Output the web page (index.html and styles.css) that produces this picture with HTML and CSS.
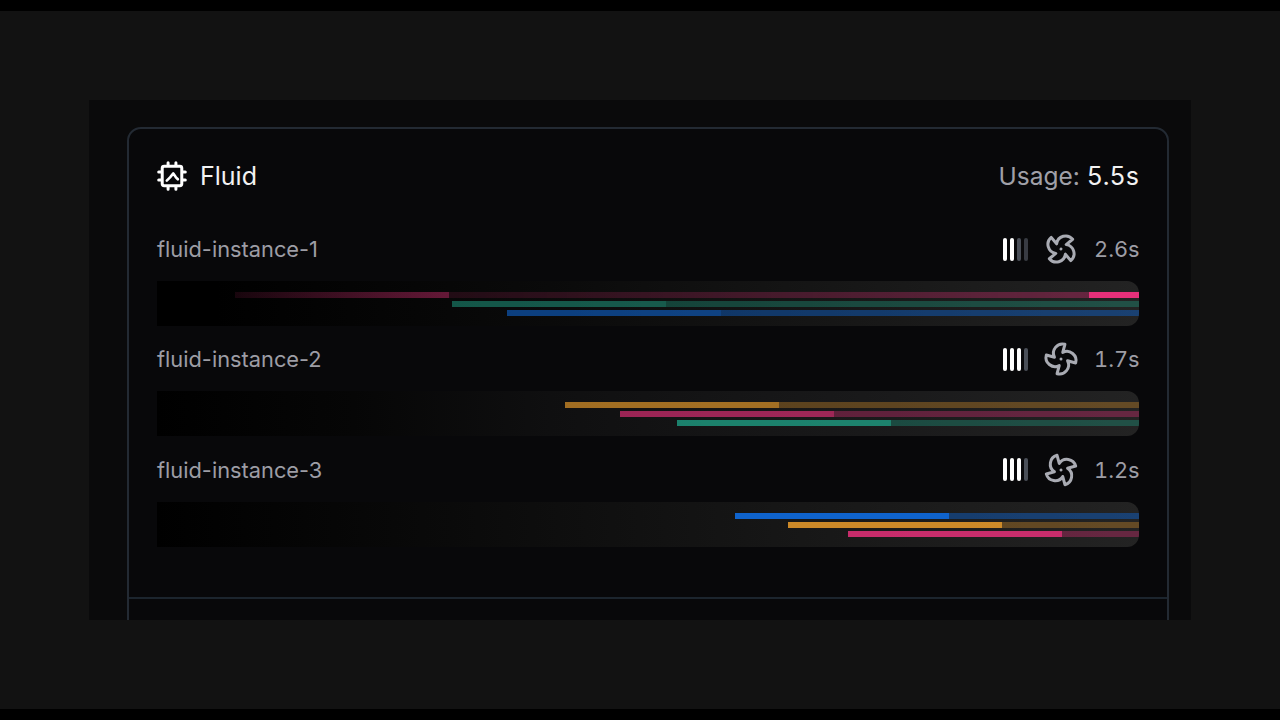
FILE: index.html
```html
<!DOCTYPE html>
<html lang="en">
<head>
  <meta charset="UTF-8">
  <meta name="viewport" content="width=device-width, initial-scale=1">
  <title>Fluid</title>
  <link rel="stylesheet" href="styles.css">
</head>
<body>
  <div class="screen">
    <div class="panel">
      <section class="card">
        <div class="card-body">
          <header class="card-head">
            <div class="card-title">
              <svg class="chip" viewBox="0.5 0.5 23 23" fill="none" stroke="#fff" stroke-width="2.300" stroke-linecap="round" stroke-linejoin="round">
                <rect x="4.500" y="4.500" width="15" height="15" rx="1.500"/>
                <path d="M9 1.800V4M15 1.800V4M9 20v2.200M15 20v2.200M1.800 9H4M1.800 15H4M20 9h2.200M20 15h2.200"/>
                <path d="M8 15.500l2.500-2.500 2.500-3 2 3 1.500 1.500" stroke-width="2"/>
              </svg>
              <h1>Fluid</h1>
            </div>
            <div class="usage">Usage: <b>5.5s</b></div>
          </header>

          <div class="instance">
            <div class="instance-head">
              <span class="instance-name">fluid-instance-1</span>
              <div class="instance-stats">
                <div class="cores"><i></i><i></i><i class="off"></i><i class="off off-2"></i></div>
                <svg class="fan fan-1" viewBox="0 0 24 24" fill="none" stroke="#a9abb3" stroke-width="2" stroke-linecap="round" stroke-linejoin="round">
                  <path d="M10.827 16.379a6.082 6.082 0 0 1-8.618-7.002l5.412 1.450a6.082 6.082 0 0 1 7.002-8.618l-1.450 5.412a6.082 6.082 0 0 1 8.618 7.002l-5.412-1.450a6.082 6.082 0 0 1-7.002 8.618l1.450-5.412Z"/>
                  <path d="M12 12v.010"/>
                </svg>
                <span class="time">2.6s</span>
              </div>
            </div>
            <div class="track track-1">
              <div class="lane" style="padding-left:78px">
                <div class="seg pink fade"></div><div class="tail pink" ></div><div class="seg-end pink"></div>
              </div>
              <div class="lane" style="padding-left:295px">
                <div class="seg green o-50"></div><div class="tail green"></div>
              </div>
              <div class="lane" style="padding-left:350px">
                <div class="seg blue o-55"></div><div class="tail blue"></div>
              </div>
            </div>
          </div>

          <div class="instance">
            <div class="instance-head">
              <span class="instance-name">fluid-instance-2</span>
              <div class="instance-stats">
                <div class="cores"><i></i><i></i><i></i><i class="off"></i></div>
                <svg class="fan fan-2" viewBox="0 0 24 24" fill="none" stroke="#a9abb3" stroke-width="2" stroke-linecap="round" stroke-linejoin="round">
                  <path d="M10.827 16.379a6.082 6.082 0 0 1-8.618-7.002l5.412 1.450a6.082 6.082 0 0 1 7.002-8.618l-1.450 5.412a6.082 6.082 0 0 1 8.618 7.002l-5.412-1.450a6.082 6.082 0 0 1-7.002 8.618l1.450-5.412Z"/>
                  <path d="M12 12v.010"/>
                </svg>
                <span class="time">1.7s</span>
              </div>
            </div>
            <div class="track track-2">
              <div class="lane" style="padding-left:408px">
                <div class="seg amber o-70"></div><div class="tail amber"></div>
              </div>
              <div class="lane" style="padding-left:463px">
                <div class="seg pink o-65"></div><div class="tail pink"></div>
              </div>
              <div class="lane" style="padding-left:520px">
                <div class="seg green o-75"></div><div class="tail green"></div>
              </div>
            </div>
          </div>

          <div class="instance">
            <div class="instance-head">
              <span class="instance-name">fluid-instance-3</span>
              <div class="instance-stats">
                <div class="cores"><i></i><i></i><i></i><i class="off"></i></div>
                <svg class="fan fan-3" viewBox="0 0 24 24" fill="none" stroke="#a9abb3" stroke-width="2" stroke-linecap="round" stroke-linejoin="round">
                  <path d="M10.827 16.379a6.082 6.082 0 0 1-8.618-7.002l5.412 1.450a6.082 6.082 0 0 1 7.002-8.618l-1.450 5.412a6.082 6.082 0 0 1 8.618 7.002l-5.412-1.450a6.082 6.082 0 0 1-7.002 8.618l1.450-5.412Z"/>
                  <path d="M12 12v.010"/>
                </svg>
                <span class="time">1.2s</span>
              </div>
            </div>
            <div class="track track-3">
              <div class="lane" style="padding-left:578px">
                <div class="seg blue o-90"></div><div class="tail blue"></div>
              </div>
              <div class="lane" style="padding-left:631px">
                <div class="seg amber o-90"></div><div class="tail amber"></div>
              </div>
              <div class="lane" style="padding-left:691px">
                <div class="seg pink o-85"></div><div class="tail pink"></div>
              </div>
            </div>
          </div>
        </div>
        <div class="card-foot"></div>
      </section>
    </div>
  </div>
</body>
</html>
```

FILE: styles.css
```css
* {
  margin: 0;
  padding: 0;
  box-sizing: border-box;
}

body {
  background-color: #000;
  font-family: Inter, 'Liberation Sans', sans-serif;
  overflow: hidden;
}

.screen {
  height: 698px;
  margin: 11px 0;
  padding: 89px 89px 0;
  background-color: #121212;
}

.panel {
  height: 520px;
  padding: 27px 22px 0 38px;
  background-color: #0a0a0b;
  overflow: hidden;
}

.card {
  border: solid #232a33;
  border-width: 2px;
  border-radius: 14px 14px 0 0;
  background-color: #08080a;
}

.card-body {
  height: 470px;
  padding: 31px 28px 0;
  border-bottom: 2px solid #1c252e;
}

.card-head {
  display: flex;
  justify-content: space-between;
  align-items: center;
  height: 32px;
  margin-bottom: 41px;
}

.card-title {
  display: flex;
  align-items: center;
  gap: 13px;
}

.chip {
  width: 30px;
  height: 30px;
}

.card-title h1 {
  font-size: 25px;
  font-weight: 400;
  color: #f2f2f2;
}

.usage {
  font-size: 24.5px;
  color: #a0a0a8;
}

.usage b {
  font-size: 25px;
  font-weight: 400;
  font-variant-numeric: tabular-nums;
  color: #f2f2f2;
}

.instance {
  margin-bottom: 17.25px;
}

.instance-head {
  display: flex;
  justify-content: space-between;
  align-items: center;
  height: 32px;
  margin-bottom: 16px;
}

.instance-name {
  font-size: 21.8px;
  color: #9d9da5;
}

.instance-stats {
  display: flex;
  align-items: center;
}

.cores {
  display: flex;
  gap: 3px;
  margin-right: 15px;
}

.cores i {
  width: 4px;
  height: 23px;
  border-radius: 2px;
  background-color: #fff;
}

.cores i.off {
  background-color: #4a4f58;
}

.cores i.off-2 {
  background-color: #383b43;
}

.fan {
  width: 36px;
  height: 36px;
  margin-right: 15px;
}

.fan-1 { transform: rotate(35deg); }
.fan-2 { transform: rotate(0deg); }
.fan-3 { transform: rotate(60deg); }

.time {
  width: 45px;
  font-size: 21.8px;
  font-variant-numeric: tabular-nums;
  text-align: right;
  color: #9d9da5;
}

.track {
  display: flex;
  flex-direction: column;
  gap: 3px;
  height: 45px;
  padding-top: 11px;
  border-radius: 0 12px 12px 0;
  overflow: hidden;
}

.track-1 { background: linear-gradient(90deg, #000 0, #000 6%, #0a0a0a 40%, #232323 100%); }
.track-2 { background: linear-gradient(90deg, #000 0, #060606 20%, #0f0f10 40%, #1a1a1b 75%, #232323 100%); }
.track-3 { background: linear-gradient(90deg, #000 0, #0a0a0a 30%, #151515 60%, #232323 100%); }

.track-1 .tail.pink {
  mask-image: linear-gradient(90deg, rgba(0, 0, 0, 0.35), #000);
}

.lane {
  display: flex;
  height: 6px;
}

.seg {
  flex: 0 0 214px;
  background-color: var(--c);
}

.tail {
  flex: 1;
  background-color: var(--c);
  opacity: 0.35;
}

.tail.blue {
  opacity: 0.42;
}

.seg-end {
  flex: 0 0 50px;
  background-color: var(--c);
}

.pink { --c: #e6307a; }
.green { --c: #1fa68a; }
.blue { --c: #0e6ce0; }
.amber { --c: #e0962a; }

.fade {
  background: linear-gradient(90deg, rgba(230, 48, 122, 0.1), rgba(230, 48, 122, 0.42));
}

.o-50 { opacity: 0.5; }
.o-55 { opacity: 0.55; }
.o-65 { opacity: 0.65; }
.o-70 { opacity: 0.7; }
.o-75 { opacity: 0.75; }
.o-85 { opacity: 0.85; }
.o-90 { opacity: 0.9; }

.card-foot {
  height: 60px;
}
```
